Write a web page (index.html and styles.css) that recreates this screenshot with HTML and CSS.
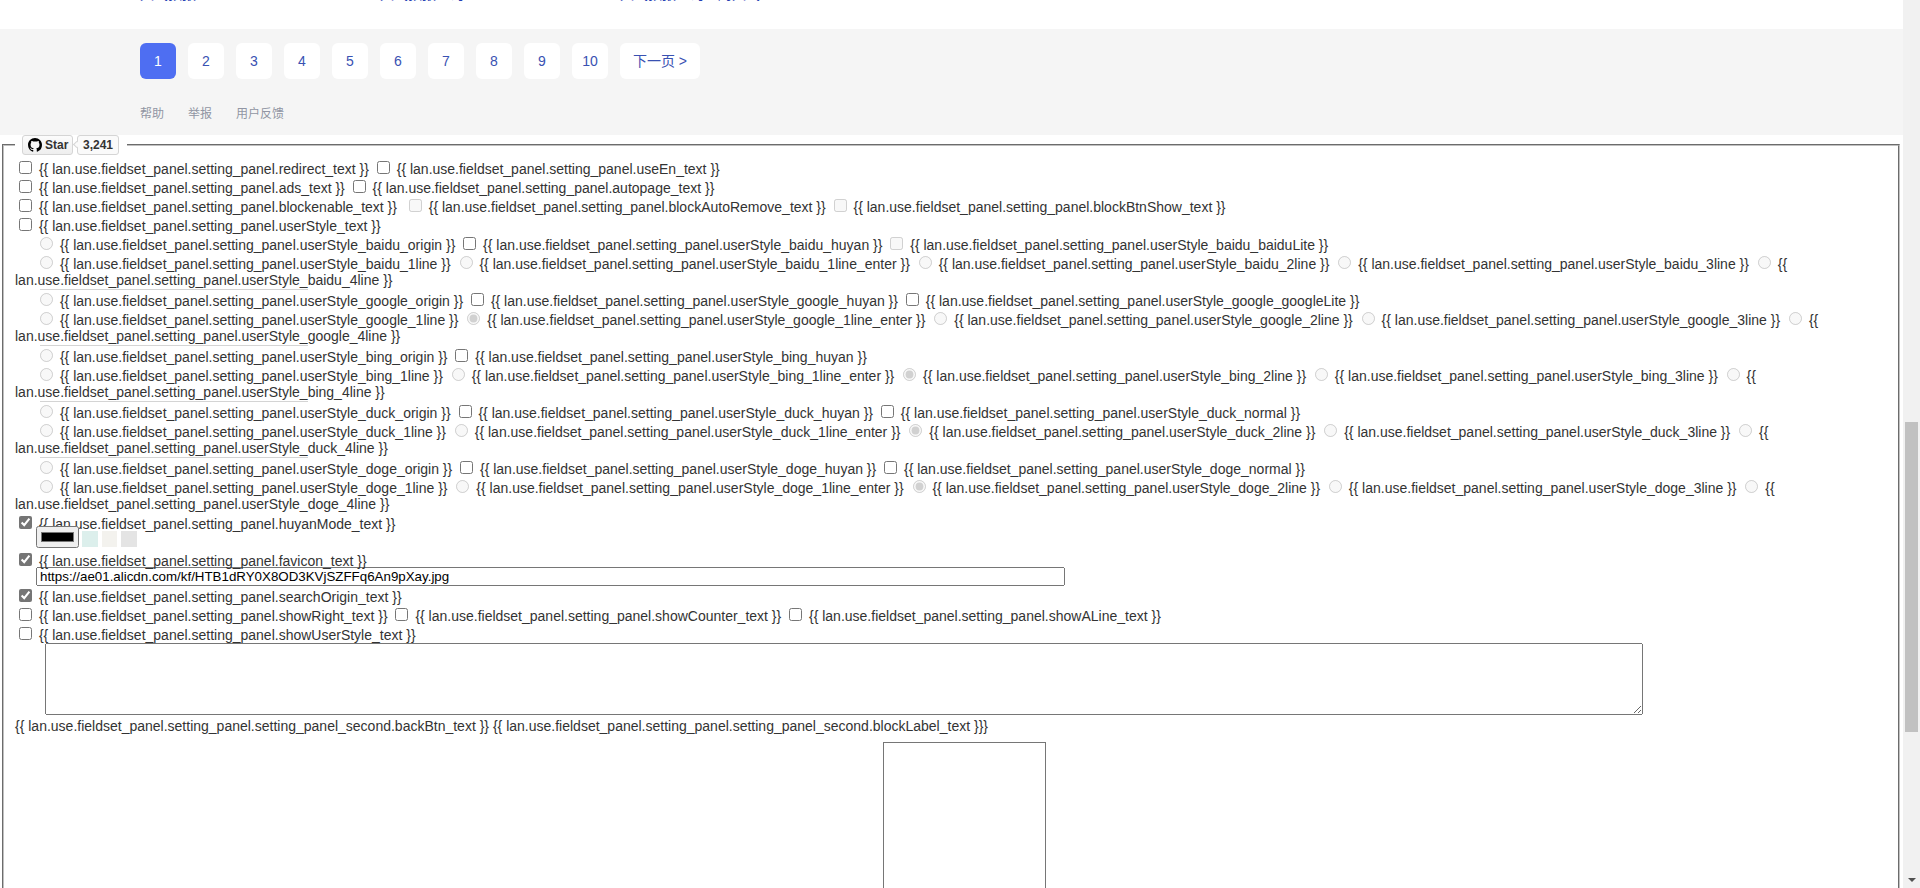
FILE: index.html
```html
<!DOCTYPE html>
<html lang="zh-CN">
<head>
    <meta charset="UTF-8">
    <title>搜索结果</title>
    <link rel="stylesheet" href="styles.css">
</head>
<body>
<div class="page">
    <div class="content">
        <div class="related">
            <a href="#">天气预报</a>
            <a href="#">天气预报查询</a>
            <a href="#">天气预报查询一周天气</a>
        </div>
        <div class="foot">
            <div class="pager">
                <a class="page-btn current" href="#">1</a>
                <a class="page-btn" href="#">2</a>
                <a class="page-btn" href="#">3</a>
                <a class="page-btn" href="#">4</a>
                <a class="page-btn" href="#">5</a>
                <a class="page-btn" href="#">6</a>
                <a class="page-btn" href="#">7</a>
                <a class="page-btn" href="#">8</a>
                <a class="page-btn" href="#">9</a>
                <a class="page-btn" href="#">10</a>
                <a class="page-btn next" href="#">下一页 &gt;</a>
            </div>
            <div class="foot-links">
                <a href="#">帮助</a>
                <a href="#">举报</a>
                <a href="#">用户反馈</a>
            </div>
        </div>

        <fieldset class="panel">
            <legend class="panel-legend">
                <span class="gh-btn">
                    <svg class="gh-icon" viewBox="0 0 16 16"><path d="M8 0C3.58 0 0 3.58 0 8c0 3.54 2.29 6.53 5.47 7.59.4.07.55-.17.55-.38 0-.19-.01-.82-.01-1.49-2.01.37-2.53-.49-2.69-.94-.09-.23-.48-.94-.82-1.13-.28-.15-.68-.52-.01-.53.63-.01 1.08.58 1.23.82.72 1.21 1.87.87 2.33.66.07-.52.28-.87.51-1.07-1.78-.2-3.64-.89-3.64-3.95 0-.87.31-1.59.82-2.15-.08-.2-.36-1.02.08-2.12 0 0 .67-.21 2.2.82.64-.18 1.32-.27 2-.27s1.36.09 2 .27c1.53-1.04 2.2-.82 2.2-.82.44 1.1.16 1.92.08 2.12.51.56.82 1.27.82 2.15 0 3.07-1.87 3.75-3.65 3.95.29.25.54.73.54 1.48 0 1.07-.01 1.93-.01 2.2 0 .21.15.46.55.38A8.01 8.01 0 0 0 16 8c0-4.42-3.58-8-8-8z"/></svg>
                    Star
                </span><span class="gh-count">3,241</span>
            </legend>

            <div class="row"><input type="checkbox"> <span>{{ lan.use.fieldset_panel.setting_panel.redirect_text }}</span> <input type="checkbox"> <span>{{ lan.use.fieldset_panel.setting_panel.useEn_text }}</span></div>
            <div class="row"><input type="checkbox"> <span>{{ lan.use.fieldset_panel.setting_panel.ads_text }}</span> <input type="checkbox"> <span>{{ lan.use.fieldset_panel.setting_panel.autopage_text }}</span></div>
            <div class="row"><input type="checkbox"> <span>{{ lan.use.fieldset_panel.setting_panel.blockenable_text }}</span> <input class="gap" type="checkbox" disabled> <span>{{ lan.use.fieldset_panel.setting_panel.blockAutoRemove_text }}</span> <input type="checkbox" disabled> <span>{{ lan.use.fieldset_panel.setting_panel.blockBtnShow_text }}</span></div>
            <div class="row"><input type="checkbox"> <span>{{ lan.use.fieldset_panel.setting_panel.userStyle_text }}</span></div>

            <div class="style-group">
                <div class="row"><input class="lead" type="radio" disabled> <span>{{ lan.use.fieldset_panel.setting_panel.userStyle_baidu_origin }}</span> <input type="checkbox"> <span>{{ lan.use.fieldset_panel.setting_panel.userStyle_baidu_huyan }}</span> <input type="checkbox" disabled> <span>{{ lan.use.fieldset_panel.setting_panel.userStyle_baidu_baiduLite }}</span></div>
                <div class="row"><input class="lead" type="radio" disabled> <span>{{ lan.use.fieldset_panel.setting_panel.userStyle_baidu_1line }}</span> <input type="radio" disabled> <span>{{ lan.use.fieldset_panel.setting_panel.userStyle_baidu_1line_enter }}</span> <input type="radio" disabled> <span>{{ lan.use.fieldset_panel.setting_panel.userStyle_baidu_2line }}</span> <input type="radio" disabled> <span>{{ lan.use.fieldset_panel.setting_panel.userStyle_baidu_3line }}</span> <input type="radio" disabled> <span>{{ lan.use.fieldset_panel.setting_panel.userStyle_baidu_4line }}</span></div>
            </div>
            <div class="style-group">
                <div class="row"><input class="lead" type="radio" disabled> <span>{{ lan.use.fieldset_panel.setting_panel.userStyle_google_origin }}</span> <input type="checkbox"> <span>{{ lan.use.fieldset_panel.setting_panel.userStyle_google_huyan }}</span> <input type="checkbox"> <span>{{ lan.use.fieldset_panel.setting_panel.userStyle_google_googleLite }}</span></div>
                <div class="row"><input class="lead" type="radio" disabled> <span>{{ lan.use.fieldset_panel.setting_panel.userStyle_google_1line }}</span> <input type="radio" disabled checked> <span>{{ lan.use.fieldset_panel.setting_panel.userStyle_google_1line_enter }}</span> <input type="radio" disabled> <span>{{ lan.use.fieldset_panel.setting_panel.userStyle_google_2line }}</span> <input type="radio" disabled> <span>{{ lan.use.fieldset_panel.setting_panel.userStyle_google_3line }}</span> <input type="radio" disabled> <span>{{ lan.use.fieldset_panel.setting_panel.userStyle_google_4line }}</span></div>
            </div>
            <div class="style-group">
                <div class="row"><input class="lead" type="radio" disabled> <span>{{ lan.use.fieldset_panel.setting_panel.userStyle_bing_origin }}</span> <input type="checkbox"> <span>{{ lan.use.fieldset_panel.setting_panel.userStyle_bing_huyan }}</span></div>
                <div class="row"><input class="lead" type="radio" disabled> <span>{{ lan.use.fieldset_panel.setting_panel.userStyle_bing_1line }}</span> <input type="radio" disabled> <span>{{ lan.use.fieldset_panel.setting_panel.userStyle_bing_1line_enter }}</span> <input type="radio" disabled checked> <span>{{ lan.use.fieldset_panel.setting_panel.userStyle_bing_2line }}</span> <input type="radio" disabled> <span>{{ lan.use.fieldset_panel.setting_panel.userStyle_bing_3line }}</span> <input type="radio" disabled> <span>{{ lan.use.fieldset_panel.setting_panel.userStyle_bing_4line }}</span></div>
            </div>
            <div class="style-group">
                <div class="row"><input class="lead" type="radio" disabled> <span>{{ lan.use.fieldset_panel.setting_panel.userStyle_duck_origin }}</span> <input type="checkbox"> <span>{{ lan.use.fieldset_panel.setting_panel.userStyle_duck_huyan }}</span> <input type="checkbox"> <span>{{ lan.use.fieldset_panel.setting_panel.userStyle_duck_normal }}</span></div>
                <div class="row"><input class="lead" type="radio" disabled> <span>{{ lan.use.fieldset_panel.setting_panel.userStyle_duck_1line }}</span> <input type="radio" disabled> <span>{{ lan.use.fieldset_panel.setting_panel.userStyle_duck_1line_enter }}</span> <input type="radio" disabled checked> <span>{{ lan.use.fieldset_panel.setting_panel.userStyle_duck_2line }}</span> <input type="radio" disabled> <span>{{ lan.use.fieldset_panel.setting_panel.userStyle_duck_3line }}</span> <input type="radio" disabled> <span>{{ lan.use.fieldset_panel.setting_panel.userStyle_duck_4line }}</span></div>
            </div>
            <div class="style-group last">
                <div class="row"><input class="lead" type="radio" disabled> <span>{{ lan.use.fieldset_panel.setting_panel.userStyle_doge_origin }}</span> <input type="checkbox"> <span>{{ lan.use.fieldset_panel.setting_panel.userStyle_doge_huyan }}</span> <input type="checkbox"> <span>{{ lan.use.fieldset_panel.setting_panel.userStyle_doge_normal }}</span></div>
                <div class="row"><input class="lead" type="radio" disabled> <span>{{ lan.use.fieldset_panel.setting_panel.userStyle_doge_1line }}</span> <input type="radio" disabled> <span>{{ lan.use.fieldset_panel.setting_panel.userStyle_doge_1line_enter }}</span> <input type="radio" disabled checked> <span>{{ lan.use.fieldset_panel.setting_panel.userStyle_doge_2line }}</span> <input type="radio" disabled> <span>{{ lan.use.fieldset_panel.setting_panel.userStyle_doge_3line }}</span> <input type="radio" disabled> <span>{{ lan.use.fieldset_panel.setting_panel.userStyle_doge_4line }}</span></div>
            </div>

            <div class="row"><input class="on" type="checkbox" checked> <span>{{ lan.use.fieldset_panel.setting_panel.huyanMode_text }}</span></div>
            <div class="swatches">
                <input class="color-input" type="color" value="#000000">
                <i class="swatch teal"></i><i class="swatch cream"></i><i class="swatch grey"></i>
            </div>
            <div class="row"><input class="on" type="checkbox" checked> <span>{{ lan.use.fieldset_panel.setting_panel.favicon_text }}</span></div>
            <input class="url-input" type="text" value="https://ae01.alicdn.com/kf/HTB1dRY0X8OD3KVjSZFFq6An9pXay.jpg">
            <div class="row"><input class="on" type="checkbox" checked> <span>{{ lan.use.fieldset_panel.setting_panel.searchOrigin_text }}</span></div>
            <div class="row"><input type="checkbox"> <span>{{ lan.use.fieldset_panel.setting_panel.showRight_text }}</span> <input type="checkbox"> <span>{{ lan.use.fieldset_panel.setting_panel.showCounter_text }}</span> <input type="checkbox"> <span>{{ lan.use.fieldset_panel.setting_panel.showALine_text }}</span></div>
            <div class="row"><input type="checkbox"> <span>{{ lan.use.fieldset_panel.setting_panel.showUserStyle_text }}</span></div>
            <textarea class="user-style"></textarea>
            <div class="second">{{ lan.use.fieldset_panel.setting_panel.setting_panel_second.backBtn_text }} {{ lan.use.fieldset_panel.setting_panel.setting_panel_second.blockLabel_text }}}</div>
            <div class="block-box"></div>
        </fieldset>
    </div>
    <div class="scrollbar">
        <div class="thumb"></div>
        <span class="arrow-down"></span>
    </div>
</div>
</body>
</html>
```

FILE: styles.css
```css
html, body {
    height: 100%;
    margin: 0;
    overflow: hidden;
}
body {
    font-family: "Liberation Sans", Arial, "Noto Sans CJK SC", sans-serif;
    font-size: 14px;
    color: #333;
    background: #fff;
}
a { text-decoration: none; }

.page {
    display: flex;
    height: 888px;
    overflow: hidden;
}
.content {
    flex: 1;
    min-width: 0;
    height: 888px;
    overflow: hidden;
}

/* clipped row at the top of the scrolled page */
.related {
    display: flex;
    align-items: flex-end;
    height: 29px;
    padding-left: 140px;
    overflow: hidden;
    box-sizing: border-box;
}
.related a {
    display: block;
    width: 240px;
    flex-shrink: 0;
    margin-bottom: 25px;
    color: #2440b3;
    font-size: 14px;
    line-height: 20px;
}

.foot {
    height: 106px;
    padding: 14px 0 0 140px;
    box-sizing: border-box;
    background: #f5f5f5;
}
.pager {
    display: flex;
    gap: 12px;
}
.page-btn {
    width: 36px;
    height: 36px;
    border-radius: 6px;
    background: #fff;
    color: #3951b2;
    text-align: center;
    line-height: 36px;
}
.page-btn.current {
    background: #4e6ef2;
    color: #fff;
}
.page-btn.next {
    width: 80px;
}
.foot-links {
    display: flex;
    gap: 24px;
    margin-top: 25px;
    font-size: 12px;
    line-height: 20px;
}
.foot-links a { color: #9195a3; }

.panel {
    margin: 0 3px 0 2px;
    padding: 4px 12px 0 11px;
    border: 2px groove #c0c0c0;
    border-bottom: 0;
    min-width: 0;
}
.panel-legend {
    display: flex;
    align-items: center;
    height: 19px;
    padding: 0 8px 0 7px;
}
.gh-btn, .gh-count {
    display: inline-flex;
    align-items: center;
    height: 20px;
    box-sizing: border-box;
    border: 1px solid #d5d5d5;
    border-radius: 3px;
    font-size: 12px;
    font-weight: 700;
    color: #333;
}
.gh-btn {
    gap: 3px;
    width: 51px;
    padding-left: 5px;
    background: linear-gradient(#fcfcfc, #eee);
}
.gh-count {
    position: relative;
    width: 42px;
    margin-left: 4px;
    justify-content: center;
    background: #fafafa;
}
.gh-count::before {
    content: "";
    position: absolute;
    left: -4px;
    top: 6px;
    width: 5px;
    height: 5px;
    border-left: 1px solid #d5d5d5;
    border-bottom: 1px solid #d5d5d5;
    background: #fafafa;
    transform: rotate(45deg);
    box-sizing: border-box;
}
.gh-icon {
    width: 14px;
    height: 14px;
    flex-shrink: 0;
}

input.lead { margin-left: 25px; }
input.gap { margin-left: 8px; }
input.on { accent-color: #757575; }

.style-group::after {
    content: "";
    display: block;
    width: 268px;
    height: 1px;
    margin: 1px 0 0 25px;
    background: #d4d4d4;
}
.style-group.last::after {
    margin-top: 0;
    background: none;
}

.swatches {
    display: flex;
    align-items: flex-end;
    height: 22px;
    margin: -6px 0 2px 21px;
}
.color-input {
    width: 43px;
    height: 22px;
    margin: 0 3px 0 0;
    padding: 1px 2px;
    position: relative;
}
.swatch {
    width: 16px;
    height: 16px;
    margin: 0 4px 1px 0;
}
.swatch.teal { background: #dcefec; }
.swatch.cream { width: 15px; background: #f3f2ee; }
.swatch.grey { background: #e4e4e4; }

.url-input {
    display: block;
    width: 1029px;
    height: 19px;
    margin: -2px 0 0 21px;
    padding: 1px 2px;
    box-sizing: border-box;
    font: 13.33px "Liberation Sans", Arial, sans-serif;
}
.user-style {
    display: block;
    width: 1598px;
    height: 72px;
    margin: 0 0 0 30px;
    box-sizing: border-box;
}
.second {
    margin-top: 3px;
}
.block-box {
    width: 163px;
    height: 300px;
    margin: 8px 0 0 868px;
    border: 1px solid #767676;
    box-sizing: border-box;
}

.scrollbar {
    display: flex;
    flex-direction: column;
    width: 17px;
    height: 888px;
    background: #f1f1f1;
}
.thumb {
    height: 310px;
    margin: 422px 2px 0;
    background: #c1c1c1;
}
.arrow-down {
    width: 0;
    margin: 146px 0 0 5px;
    border: 4px solid transparent;
    border-top-color: #505050;
}
```
